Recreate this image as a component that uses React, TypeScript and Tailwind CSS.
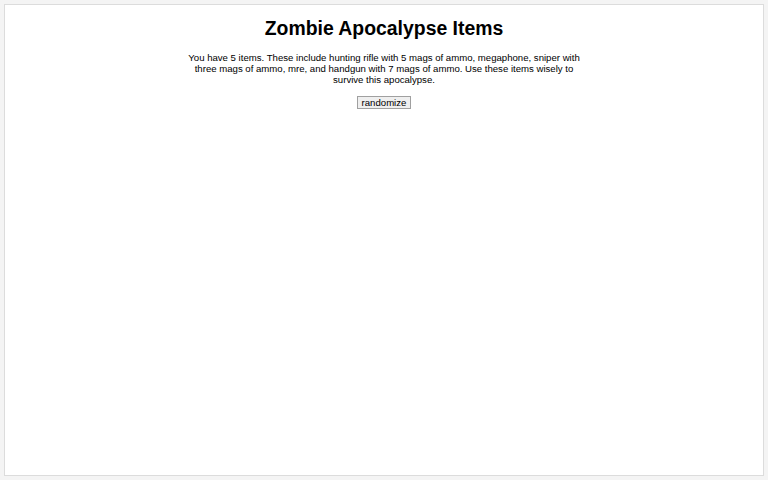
export default function App() {
  return (
    <div className="h-[480px] w-[768px] bg-[#f4f4f4] p-[4px] font-['Liberation_Sans',Arial,sans-serif] text-black">
      <div className="flex h-full flex-col items-center border border-[#dcdcdc] bg-white pt-[11px]">
        <h1 className="text-[19.4px] font-bold leading-[24px]">Zombie Apocalypse Items</h1>
        <p className="mt-[12px] w-[420px] text-center text-[9.6px] leading-[11px]">
          You have 5 items. These include hunting rifle with 5 mags of ammo, megaphone, sniper with
          <br />
          three mags of ammo, mre, and handgun with 7 mags of ammo. Use these items wisely to
          <br />
          survive this apocalypse.
        </p>
        <button className="mt-[11px] border border-[#a0a0a0] bg-[#efefef] px-[4px] text-[9.6px] leading-[11px]">
          randomize
        </button>
      </div>
    </div>
  );
}
